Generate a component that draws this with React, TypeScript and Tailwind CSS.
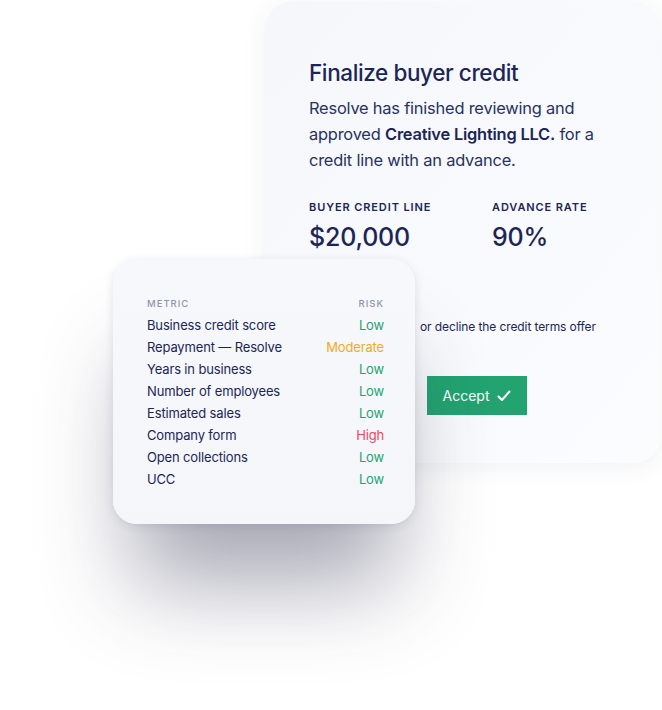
import React from "react";

const rows: { m: string; r: string; c: string }[] = [
  { m: "Business credit score", r: "Low", c: "text-[#1fa36f]" },
  { m: "Repayment — Resolve", r: "Moderate", c: "text-[#f7a81b]" },
  { m: "Years in business", r: "Low", c: "text-[#1fa36f]" },
  { m: "Number of employees", r: "Low", c: "text-[#1fa36f]" },
  { m: "Estimated sales", r: "Low", c: "text-[#1fa36f]" },
  { m: "Company form", r: "High", c: "text-[#f2445f]" },
  { m: "Open collections", r: "Low", c: "text-[#1fa36f]" },
  { m: "UCC", r: "Low", c: "text-[#1fa36f]" },
];

export default function App() {
  return (
    <div
      className="relative w-[662px] h-[710px] overflow-hidden bg-white text-[#1b2657]"
      style={{ fontFamily: "Inter, 'Noto Sans', sans-serif" }}
    >
      {/* Main card */}
      <div className="absolute left-[265px] top-[1px] w-[396px] h-[462px] rounded-[28px] bg-gradient-to-br from-[#f6f7fb] to-[#fbfcfe] shadow-[0_4px_24px_rgba(40,50,90,0.07)]">
        <div className="pl-[44px] pt-[58px] pr-[20px]">
          <h1 className="text-[22.5px] leading-[28px] font-medium tracking-[-0.4px]">Finalize buyer credit</h1>
          <p className="mt-[8px] text-[16.4px] leading-[26px] text-[#26325f] tracking-[-0.2px]">
            Resolve has finished reviewing and approved{" "}
            <b className="font-semibold text-[#1b2657]">Creative Lighting LLC.</b> for a credit line with an
            advance.
          </p>
          <div className="mt-[27px] flex">
            <div className="w-[183px]">
              <div className="text-[11px] leading-[14px] font-semibold tracking-[0.9px]">BUYER CREDIT LINE</div>
              <div className="mt-[8px] text-[25px] leading-[30px] font-medium tracking-[-0.2px]">$20,000</div>
            </div>
            <div>
              <div className="text-[11px] leading-[14px] font-semibold tracking-[0.9px]">ADVANCE RATE</div>
              <div className="mt-[8px] text-[25px] leading-[30px] font-medium tracking-[-0.2px]">90%</div>
            </div>
          </div>
          <p className="mt-[66px] text-[12px] leading-[18px] tracking-[-0.1px] text-[#1b2657] whitespace-nowrap">
            <span className="inline-block w-[111px]" />
            or decline the credit terms offer
          </p>
          <div className="mt-[40px] flex justify-end pr-[114px]">
            <button className="h-[39px] w-[100px] bg-[#22a370] text-white text-[14px] flex items-center justify-center gap-[8px]">
              Accept
              <svg width="14" height="12" viewBox="0 0 14 12" fill="none">
                <path d="M1.5 6.5 L5 10 L12.5 1.5" stroke="white" strokeWidth="2" strokeLinecap="round" strokeLinejoin="round" />
              </svg>
            </button>
          </div>
        </div>
      </div>

      {/* Risk card */}
      <div className="absolute left-[113px] top-[259px] w-[302px] h-[265px] rounded-[24px] bg-gradient-to-b from-[#f7f8fb] to-[#f4f6fa] shadow-[0_80px_90px_-20px_rgba(50,50,80,0.42),0_2px_10px_rgba(40,40,80,0.12)]">
        <div className="pl-[34px] pr-[31px] pt-[39px]">
          <div className="flex justify-between text-[9.5px] leading-[12px] font-medium tracking-[1px] text-[#8e96ad]">
            <span>METRIC</span>
            <span>RISK</span>
          </div>
          <div className="mt-[5px] flex flex-col">
            {rows.map((r) => (
              <div key={r.m} className="flex justify-between h-[22px] items-center text-[13px] tracking-[-0.15px]">
                <span className="text-[#1b2657]">{r.m}</span>
                <span className={r.c}>{r.r}</span>
              </div>
            ))}
          </div>
        </div>
      </div>
    </div>
  );
}
